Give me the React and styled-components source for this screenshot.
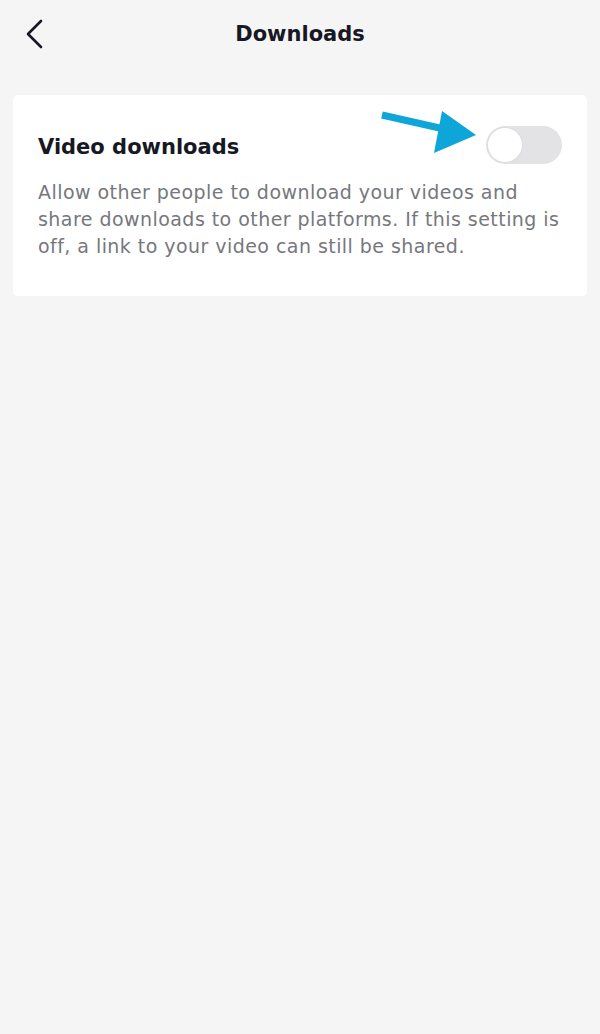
import React, { useState } from 'react'
import styled, { createGlobalStyle } from 'styled-components'

const GlobalStyle = createGlobalStyle`
  html, body {
    margin: 0;
    padding: 0;
    background: #f5f5f5;
    font-family: "DejaVu Sans", "Liberation Sans", sans-serif;
  }
`

function App() {
  const [on, setOn] = useState(false)

  return (
    <Page>
      <GlobalStyle />
      <Header>
        <BackButton aria-label="Back">
          <svg width="20" height="30" viewBox="0 0 20 30" fill="none">
            <path d="M17 2 L4 15 L17 28" stroke="#161823" strokeWidth="2.6" strokeLinecap="round" strokeLinejoin="round" />
          </svg>
        </BackButton>
        <Title>Downloads</Title>
        <span />
      </Header>
      <Card>
        <Row>
          <Label>Video downloads</Label>
          <ToggleWrap>
            <Arrow width="100" height="48" viewBox="0 0 100 48">
              <path d="M2 6 L64 20" stroke="#0ea5d8" strokeWidth="7" />
              <path d="M62 2 L96 26 L54 44 Z" fill="#0ea5d8" />
            </Arrow>
            <Toggle $on={on} onClick={() => setOn(!on)}>
              <Knob />
            </Toggle>
          </ToggleWrap>
        </Row>
        <Description>
          Allow other people to download your videos and share downloads to other platforms. If this setting is off, a link to your video can still be shared.
        </Description>
      </Card>
    </Page>
  )
}

const Page = styled.div`
  min-height: 1034px;
  background: #f5f5f5;
  display: flex;
  flex-direction: column;
  gap: 27px;
`

const Header = styled.div`
  height: 68px;
  display: grid;
  grid-template-columns: 1fr auto 1fr;
  align-items: center;
  padding: 0 24px;
`

const BackButton = styled.button`
  justify-self: start;
  display: flex;
  border: none;
  background: transparent;
  padding: 0;
  cursor: pointer;
`

const Title = styled.h1`
  margin: 0;
  font-size: 21px;
  font-weight: 700;
  color: #161823;
`

const Card = styled.div`
  margin: 0 13px;
  background: #fff;
  border-radius: 5px;
  padding: 31px 25px 36px;
  display: flex;
  flex-direction: column;
  gap: 11px;
`

const Row = styled.div`
  display: flex;
  justify-content: space-between;
  align-items: center;
  height: 42px;
`

const Label = styled.div`
  font-size: 21px;
  font-weight: 700;
  color: #161823;
`

const ToggleWrap = styled.div`
  position: relative;
  display: flex;
  align-self: flex-start;
`

const Arrow = styled.svg`
  position: absolute;
  right: 82px;
  top: -17px;
`

const Toggle = styled.div`
  width: 76px;
  height: 38px;
  box-sizing: border-box;
  padding: 2px;
  border-radius: 19px;
  background: ${p => (p.$on ? '#20d5ec' : '#e3e3e6')};
  display: flex;
  justify-content: ${p => (p.$on ? 'flex-end' : 'flex-start')};
  cursor: pointer;
`

const Knob = styled.div`
  width: 34px;
  height: 34px;
  border-radius: 50%;
  background: #fff;
  box-shadow: 0 0 0 1px #dcdcdf;
`

const Description = styled.p`
  margin: 0;
  font-size: 19px;
  line-height: 27px;
  letter-spacing: 0.45px;
  color: #76777d;
`

export default App
